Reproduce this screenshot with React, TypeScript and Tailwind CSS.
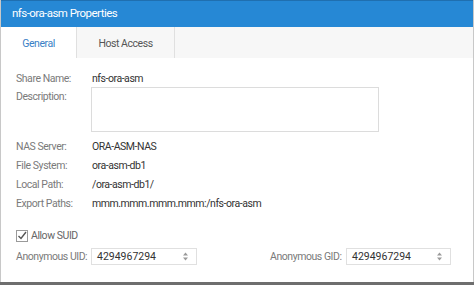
import React from "react";

function Spinner() {
  return (
    <svg width="7" height="11" viewBox="0 0 7 11" className="shrink-0">
      <path d="M3.5 1.5 L6 4.5 L1 4.5 Z" fill="#9a9a9a" />
      <path d="M3.5 9.5 L6 6.5 L1 6.5 Z" fill="#9a9a9a" />
    </svg>
  );
}

function Row({ label, value }: { label: string; value: string }) {
  return (
    <div className="flex items-center h-[19px]">
      <div className="w-[76px] text-[#7a7a7a] whitespace-nowrap">{label}</div>
      <div className="text-[#333] whitespace-nowrap">{value}</div>
    </div>
  );
}

export default function App() {
  return (
    <div
      className="w-[474px] h-[285px] bg-white flex flex-col overflow-hidden text-[10.5px] tracking-[-0.45px]"
      style={{ fontFamily: "Roboto, 'Liberation Sans', sans-serif" }}
    >
      <div className="flex-1 flex flex-col border-l border-r border-[#c8c8c8]">
        <div className="h-[27px] bg-[#2688d5] border-t border-[#1f6fb0] flex items-center pl-[11px] text-white text-[11.5px] tracking-[-0.55px]">
          nfs-ora-asm Properties
        </div>
        <div className="h-[31px] bg-[#f7f7f7] flex">
          <div className="w-[75px] bg-white flex items-center justify-center pt-[2px] text-[#3a7fc6]">
            General
          </div>
          <div className="w-[99px] border-l border-r border-[#e0e0e0] flex items-center justify-center pt-[2px] text-[#555]">
            Host Access
          </div>
        </div>
        <div className="flex flex-col pl-[15px] pt-[11px]">
          <Row label="Share Name:" value="nfs-ora-asm" />
          <div className="flex mt-[-1px]">
            <div className="w-[75px] text-[#7a7a7a] pt-[2px]">Description:</div>
            <div className="w-[288px] h-[45px] border border-[#dcdcdc]" />
          </div>
          <div className="mt-[5px]">
            <Row label="NAS Server:" value="ORA-ASM-NAS" />
            <Row label="File System:" value="ora-asm-db1" />
            <Row label="Local Path:" value="/ora-asm-db1/" />
            <Row label="Export Paths:" value="mmm.mmm.mmm.mmm:/nfs-ora-asm" />
          </div>
          <div className="flex items-center mt-[15px] h-[16px] gap-[3px] text-[#666]">
            <svg width="12" height="12" viewBox="0 0 12 12">
              <rect x="0.5" y="0.5" width="11" height="11" fill="white" stroke="#9a9a9a" />
              <path d="M2.5 6 L5 8.5 L10 2" fill="none" stroke="#555" strokeWidth="1.4" />
            </svg>
            <span>Allow SUID</span>
          </div>
          <div className="flex items-center mt-[4px] h-[17px]">
            <div className="w-[75px] text-[#7a7a7a] whitespace-nowrap">Anonymous UID:</div>
            <div className="w-[106px] h-[17px] border border-[#e0e0e0] flex items-center justify-between pl-[5px] pr-[7px] text-[#333] tracking-normal">
              <span>4294967294</span>
              <Spinner />
            </div>
            <div className="w-[73px] shrink-0" />
            <div className="w-[76px] text-[#7a7a7a] whitespace-nowrap">Anonymous GID:</div>
            <div className="w-[105px] h-[17px] border border-[#e0e0e0] flex items-center justify-between pl-[5px] pr-[7px] text-[#333] tracking-normal">
              <span>4294967294</span>
              <Spinner />
            </div>
          </div>
        </div>
      </div>
      <div className="h-[3px] bg-[#6e6e6e]" />
    </div>
  );
}
